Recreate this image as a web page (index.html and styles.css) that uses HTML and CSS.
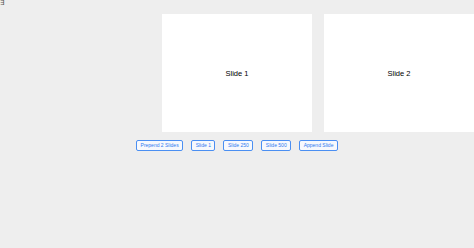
FILE: index.html
```html
<!DOCTYPE html>
<html>
<head>
<meta charset="utf-8">
<link rel="stylesheet" href="styles.css">
</head>
<body>
<div class="mark">∃</div>
<div class="swiper">
  <div class="track">
    <div class="slide">Slide 1</div>
    <div class="slide">Slide 2</div>
  </div>
</div>
<div class="controls">
  <button class="btn">Prepend 2 Slides</button>
  <button class="btn">Slide 1</button>
  <button class="btn">Slide 250</button>
  <button class="btn">Slide 500</button>
  <button class="btn">Append Slide</button>
</div>
</body>
</html>
```
FILE: styles.css
```css
html, body {
  margin: 0;
  padding: 0;
  background: #eeeeee;
  font-family: "Liberation Sans", Arial, sans-serif;
}
.mark {
  height: 14px;
  font-family: "DejaVu Sans", sans-serif;
  font-size: 7px;
  line-height: 6px;
  color: #555;
  overflow: hidden;
}
.swiper {
  height: 118px;
  overflow: hidden;
}
.track {
  display: flex;
  gap: 12px;
  padding-left: 162px;
  height: 100%;
}
.slide {
  flex: 0 0 150px;
  background: #ffffff;
  display: flex;
  align-items: center;
  justify-content: center;
  font-size: 7.5px;
  color: #000;
}
.controls {
  display: flex;
  justify-content: center;
  gap: 8px;
  margin-top: 8px;
}
.btn {
  font-family: "Liberation Sans", Arial, sans-serif;
  font-size: 5px;
  height: 11px;
  padding: 0 3.5px;
  margin: 0;
  line-height: 9px;
  color: #2f7bf0;
  background: #f7f9fd;
  border: 1px solid #4b8ff2;
  border-radius: 2px;
}
```
